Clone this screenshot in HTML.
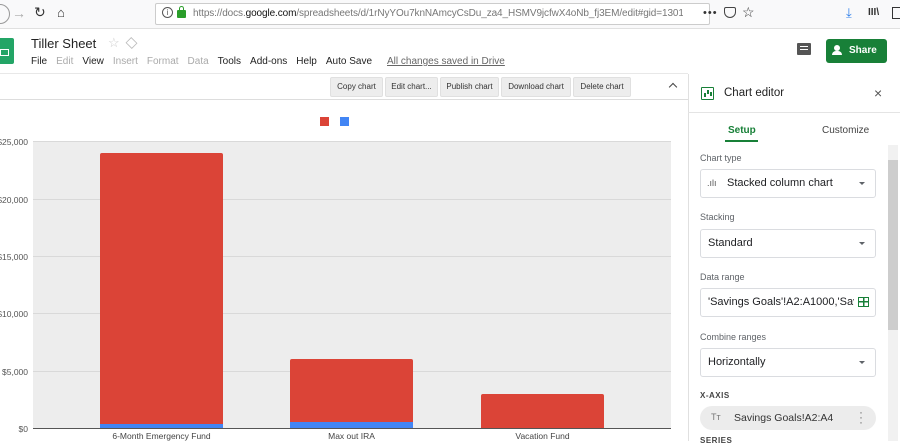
<!DOCTYPE html>
<html><head><style>
*{margin:0;padding:0;box-sizing:border-box}
body{width:900px;height:441px;overflow:hidden;background:#fff;font-family:"Liberation Sans",Arial,sans-serif;position:relative;color:#202124}
.abs{position:absolute}
.menu span{margin-right:9px}
.btn{position:absolute;top:77px;height:20px;background:#ededed;border:1px solid #e0e0e0;border-radius:2px;font-size:8px;color:#333;line-height:18px;text-align:center}
.lbl{position:absolute;left:700px;font-size:9px;color:#5f6368}
.box{position:absolute;left:700px;width:176px;height:29px;border:1px solid #dadce0;border-radius:3px;font-size:11px;color:#202124;line-height:27px;padding-left:7px;background:#fff}
.dd{position:absolute;right:10px;top:12px;border-left:3px solid transparent;border-right:3px solid transparent;border-top:3px solid #5f6368}
.yl{position:absolute;font-size:8.5px;color:#555;right:872px;text-align:right}
.grid{position:absolute;left:33px;width:638px;height:1px;background:#d9d9d9}
</style></head><body>
<div class="abs" style="left:0;top:0;width:900px;height:29px;background:#f9f9fa;border-bottom:1px solid #e0e0e0"></div>
<div class="abs" style="left:-10px;top:4px;width:20px;height:20px;border:1px solid #999;border-radius:50%"></div>
<div class="abs" style="left:12px;top:5px;font-size:14px;color:#aaa">→</div>
<div class="abs" style="left:34px;top:4px;font-size:14px;color:#333">↻</div>
<div class="abs" style="left:57px;top:5px;font-size:13px;color:#333">⌂</div>
<div class="abs" style="left:155px;top:3px;width:555px;height:22px;background:#fff;border:1px solid #ccc;border-radius:2px"></div>
<div class="abs" style="left:162px;top:7px;width:11px;height:11px;border:1px solid #555;border-radius:50%;font-size:8px;text-align:center;line-height:9px;color:#555">i</div>
<div class="abs" style="left:177px;top:10px;width:9px;height:8px;background:#2a9d2a;border-radius:1px"></div>
<div class="abs" style="left:179px;top:6px;width:5px;height:6px;border:1.5px solid #2a9d2a;border-bottom:none;border-radius:3px 3px 0 0"></div>
<div class="abs" style="left:193px;top:8px;width:490px;overflow:hidden;font-size:10px;letter-spacing:-0.1px;color:#777;white-space:nowrap">https://docs.<span style="color:#111">google.com</span>/spreadsheets/d/1rNyYOu7knNAmcyCsDu_za4_HSMV9jcfwX4oNb_fj3EM/edit#gid=1301</div>
<div class="abs" style="left:703px;top:7px;font-size:11px;color:#333;letter-spacing:1px">•••</div>
<div class="abs" style="left:724px;top:7px;width:12px;height:11px;border:1.5px solid #444;border-radius:2px 2px 6px 6px"></div>
<div class="abs" style="left:742px;top:4px;font-size:14px;color:#333">☆</div>
<div class="abs" style="left:846px;top:5px;font-size:13px;color:#2b7de9">⤓</div>
<div class="abs" style="left:868px;top:7px;font-size:10px;color:#333;font-weight:bold">III\</div>
<div class="abs" style="left:892px;top:7px;width:10px;height:12px;border:1.5px solid #333"></div>
<div class="abs" style="left:-4px;top:38px;width:18px;height:26px;background:#23a566;border-radius:2px"></div>
<div class="abs" style="left:0;top:49px;width:9px;height:7px;border:1.5px solid #fff"></div>
<div class="abs" style="left:31px;top:36px;font-size:13px;color:#222">Tiller Sheet</div>
<div class="abs" style="left:108px;top:35px;font-size:13px;color:#ccc">☆</div>
<div class="abs" style="left:126px;top:38px;width:11px;height:10px;border:1.5px solid #bbb;transform:rotate(45deg) scale(.8)"></div>
<div class="abs menu" style="left:31px;top:56px;font-size:10px;white-space:nowrap;color:#222"><span>File</span><span style="color:#aaa">Edit</span><span>View</span><span style="color:#aaa">Insert</span><span style="color:#aaa">Format</span><span style="color:#aaa">Data</span><span>Tools</span><span>Add-ons</span><span>Help</span><span>Auto Save</span><span style="margin-left:6px;color:#666;text-decoration:underline">All changes saved in Drive</span></div>
<div class="abs" style="left:797px;top:43px;width:14px;height:12px;background:#555;border-radius:1px"></div>
<div class="abs" style="left:800px;top:46px;width:8px;height:1px;background:#fff;box-shadow:0 3px 0 #fff"></div>
<div class="abs" style="left:826px;top:39px;width:61px;height:24px;background:#188038;border-radius:3px;color:#fff;font-size:10px;font-weight:bold;line-height:24px;padding-left:23px">Share</div>
<div class="abs" style="left:834px;top:45px;width:6px;height:6px;background:#fff;border-radius:50%"></div>
<div class="abs" style="left:832px;top:51px;width:10px;height:4px;background:#fff;border-radius:4px 4px 0 0"></div>
<div class="abs" style="left:0;top:73px;width:688px;height:1px;background:#e8e8e8"></div>
<div class="abs" style="left:0;top:99px;width:688px;height:1px;background:#ddd"></div>
<div class="btn" style="left:330px;width:53px">Copy chart</div>
<div class="btn" style="left:385px;width:53px">Edit chart...</div>
<div class="btn" style="left:440px;width:59px">Publish chart</div>
<div class="btn" style="left:501px;width:70px">Download chart</div>
<div class="btn" style="left:573px;width:58px">Delete chart</div>
<div class="abs" style="left:670px;top:84px;width:6px;height:6px;border-left:1.5px solid #444;border-top:1.5px solid #444;transform:rotate(45deg)"></div>
<div class="abs" style="left:320px;top:117px;width:9px;height:9px;background:#db4437"></div>
<div class="abs" style="left:340px;top:117px;width:9px;height:9px;background:#4285f4"></div>
<div class="abs" style="left:33px;top:141px;width:638px;height:287px;background:#ededed"></div>
<div class="grid" style="top:141px"></div><div class="grid" style="top:199px"></div><div class="grid" style="top:256px"></div><div class="grid" style="top:313px"></div><div class="grid" style="top:371px"></div>
<div class="abs" style="left:33px;top:428px;width:638px;height:1px;background:#555"></div>
<div class="yl" style="top:137px">$25,000</div><div class="yl" style="top:195px">$20,000</div><div class="yl" style="top:252px">$15,000</div><div class="yl" style="top:309px">$10,000</div><div class="yl" style="top:367px">$5,000</div><div class="yl" style="top:424px">$0</div>
<div class="abs" style="left:100px;top:153px;width:123px;height:275px;background:#db4437;border-radius:2px 2px 0 0"></div>
<div class="abs" style="left:100px;top:424px;width:123px;height:4px;background:#4285f4"></div>
<div class="abs" style="left:290px;top:359px;width:123px;height:69px;background:#db4437;border-radius:2px 2px 0 0"></div>
<div class="abs" style="left:290px;top:422px;width:123px;height:6px;background:#4285f4"></div>
<div class="abs" style="left:481px;top:394px;width:123px;height:34px;background:#db4437;border-radius:2px 2px 0 0"></div>
<div class="abs" style="left:100px;top:431px;width:123px;text-align:center;font-size:8.5px;color:#444">6-Month Emergency Fund</div>
<div class="abs" style="left:290px;top:431px;width:123px;text-align:center;font-size:8.5px;color:#444">Max out IRA</div>
<div class="abs" style="left:481px;top:431px;width:123px;text-align:center;font-size:8.5px;color:#444">Vacation Fund</div>
<div class="abs" style="left:688px;top:74px;width:212px;height:367px;background:#fff;border-left:1px solid #e0e0e0"></div>
<div class="abs" style="left:701px;top:87px;width:13px;height:13px;border:1.5px solid #188038;border-radius:1px"></div>
<div class="abs" style="left:704px;top:93px;width:1.5px;height:4px;background:#188038;box-shadow:3px -3px 0 #188038,6px -1px 0 #188038"></div>
<div class="abs" style="left:724px;top:87px;font-size:11.5px;color:#222">Chart editor</div>
<div class="abs" style="left:874px;top:85px;font-size:14px;color:#555">×</div>
<div class="abs" style="left:688px;top:112px;width:212px;height:1px;background:#e4e4e4"></div>
<div class="abs" style="left:728px;top:125px;font-size:10px;color:#188038;font-weight:bold">Setup</div>
<div class="abs" style="left:725px;top:140px;width:33px;height:2px;background:#188038"></div>
<div class="abs" style="left:822px;top:125px;font-size:10px;color:#444">Customize</div>
<div class="abs" style="left:888px;top:145px;width:10px;height:296px;background:#f1f1f1"></div>
<div class="abs" style="left:888px;top:160px;width:10px;height:170px;background:#cdcdcd"></div>
<div class="lbl" style="top:153px">Chart type</div>
<div class="box" style="top:169px;padding-left:26px">Stacked column chart<div class="dd"></div></div>
<div class="abs" style="left:707px;top:178px;font-size:9px;color:#555">.ılı</div>
<div class="lbl" style="top:212px">Stacking</div>
<div class="box" style="top:229px">Standard<div class="dd"></div></div>
<div class="lbl" style="top:272px">Data range</div>
<div class="box" style="top:288px"><div style="width:146px;overflow:hidden;white-space:nowrap">'Savings Goals'!A2:A1000,'Savings Goals'</div></div>
<div class="abs" style="left:858px;top:297px;width:11px;height:10px;border:1.5px solid #188038;background:linear-gradient(#188038,#188038) 50% 0/1.5px 100% no-repeat,linear-gradient(#188038,#188038) 0 50%/100% 1.5px no-repeat"></div>
<div class="lbl" style="top:332px">Combine ranges</div>
<div class="box" style="top:348px">Horizontally<div class="dd"></div></div>
<div class="abs" style="left:700px;top:391px;font-size:8px;color:#444;letter-spacing:.5px;font-weight:bold">X-AXIS</div>
<div class="abs" style="left:700px;top:406px;width:176px;height:24px;background:#ececec;border-radius:12px;font-size:10.5px;line-height:24px;padding-left:34px;color:#333">Savings Goals!A2:A4</div>
<div class="abs" style="left:711px;top:412px;font-size:9px;color:#777">Tт</div>
<div class="abs" style="left:859px;top:410px;font-size:12px;color:#777;line-height:5px">·<br>·<br>·</div>
<div class="abs" style="left:700px;top:436px;font-size:8px;color:#444;font-weight:bold;letter-spacing:.5px">SERIES</div>
</body></html>
